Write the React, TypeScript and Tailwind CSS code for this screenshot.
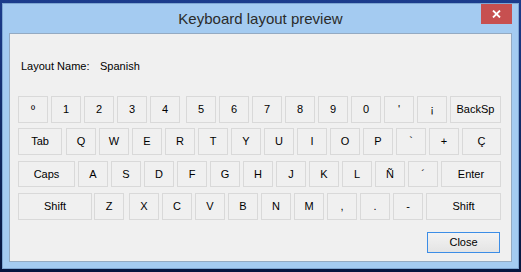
import React from "react";

type Key = { label: string; cls: string };

// widths and gaps taken from the dialog; the preview spaces keys unevenly
const rows: Key[][] = [
  [
    { label: "º", cls: "w-[30px]" },
    { label: "1", cls: "w-[30px] ml-[3px]" },
    { label: "2", cls: "w-[30px] ml-[3px]" },
    { label: "3", cls: "w-[30px] ml-[3px]" },
    { label: "4", cls: "w-[30px] ml-[3px]" },
    { label: "5", cls: "w-[30px] ml-[6px]" },
    { label: "6", cls: "w-[30px] ml-[3px]" },
    { label: "7", cls: "w-[30px] ml-[3px]" },
    { label: "8", cls: "w-[30px] ml-[3px]" },
    { label: "9", cls: "w-[30px] ml-[3px]" },
    { label: "0", cls: "w-[30px] ml-[3px]" },
    { label: "'", cls: "w-[30px] ml-[3px]" },
    { label: "¡", cls: "w-[30px] ml-[3px]" },
    { label: "BackSp", cls: "w-[51px] ml-[3px]" },
  ],
  [
    { label: "Tab", cls: "w-[44px]" },
    { label: "Q", cls: "w-[30px] ml-[4px]" },
    { label: "W", cls: "w-[30px] ml-[3px]" },
    { label: "E", cls: "w-[30px] ml-[3px]" },
    { label: "R", cls: "w-[30px] ml-[3px]" },
    { label: "T", cls: "w-[30px] ml-[3px]" },
    { label: "Y", cls: "w-[30px] ml-[3px]" },
    { label: "U", cls: "w-[30px] ml-[3px]" },
    { label: "I", cls: "w-[30px] ml-[3px]" },
    { label: "O", cls: "w-[30px] ml-[3px]" },
    { label: "P", cls: "w-[30px] ml-[3px]" },
    { label: "`", cls: "w-[30px] ml-[3px]" },
    { label: "+", cls: "w-[30px] ml-[3px]" },
    { label: "Ç", cls: "w-[39px] ml-[3px]" },
  ],
  [
    { label: "Caps", cls: "w-[57px]" },
    { label: "A", cls: "w-[30px] ml-[3px]" },
    { label: "S", cls: "w-[30px] ml-[3px]" },
    { label: "D", cls: "w-[30px] ml-[3px]" },
    { label: "F", cls: "w-[30px] ml-[3px]" },
    { label: "G", cls: "w-[30px] ml-[3px]" },
    { label: "H", cls: "w-[30px] ml-[3px]" },
    { label: "J", cls: "w-[30px] ml-[3px]" },
    { label: "K", cls: "w-[30px] ml-[3px]" },
    { label: "L", cls: "w-[30px] ml-[3px]" },
    { label: "Ñ", cls: "w-[30px] ml-[3px]" },
    { label: "´", cls: "w-[30px] ml-[3px]" },
    { label: "Enter", cls: "w-[60px] ml-[3px]" },
  ],
  [
    { label: "Shift", cls: "w-[74px]" },
    { label: "Z", cls: "w-[30px] ml-[2px]" },
    { label: "X", cls: "w-[30px] ml-[5px]" },
    { label: "C", cls: "w-[30px] ml-[3px]" },
    { label: "V", cls: "w-[30px] ml-[3px]" },
    { label: "B", cls: "w-[30px] ml-[3px]" },
    { label: "N", cls: "w-[30px] ml-[3px]" },
    { label: "M", cls: "w-[30px] ml-[3px]" },
    { label: ",", cls: "w-[30px] ml-[3px]" },
    { label: ".", cls: "w-[30px] ml-[3px]" },
    { label: "-", cls: "w-[30px] ml-[3px]" },
    { label: "Shift", cls: "w-[75px] ml-[3px]" },
  ],
];

function KeyCap({ k }: { k: Key }) {
  return (
    <div
      className={`${k.cls} h-full shrink-0 flex items-center justify-center border border-[#d9d9d9] bg-[#f0f0f0] text-[11px] text-black`}
    >
      {k.label}
    </div>
  );
}

export default function App() {
  return (
    <div
      className="w-[521px] h-[272px] pt-[3px] pl-[2px] bg-gradient-to-b from-[#1c3c8c] to-[#07173f] overflow-hidden"
      style={{ fontFamily: '"Liberation Sans", Arial, sans-serif' }}
    >
      <div className="w-[517px] h-[266px] border border-[#7ea6d2] bg-[#a4cbf1] flex flex-col px-[6px] pb-[6px]">
        {/* title bar */}
        <div className="h-[29px] grid grid-cols-[1fr_auto_1fr] shrink-0">
          <div />
          <div className="self-center pt-[1px] text-[15px] leading-[18px] text-[#2b2b2b]">
            Keyboard layout preview
          </div>
          <div className="flex justify-end items-start">
            <div className="w-[31px] h-[20px] bg-[#c75050] flex items-center justify-center">
              <svg width="9" height="8" viewBox="0 0 9 8">
                <path d="M1 0.5 L8 7.5 M8 0.5 L1 7.5" stroke="#fff" strokeWidth="1.8" fill="none" />
              </svg>
            </div>
          </div>
        </div>

        {/* client area */}
        <div className="flex-1 border border-[#94aac2] bg-[#f0f0f0] flex flex-col text-[11px] text-black">
          <div className="mt-[26px] h-[13px] leading-[13px] pl-[11px] flex">
            <span className="w-[79px]">Layout Name:</span>
            <span>Spanish</span>
          </div>

          <div className="mt-[23px] pl-[8px] flex flex-col gap-[5.9px]">
            {rows.map((row, i) => (
              <div key={i} className="flex h-[26.5px]">
                {row.map((k, j) => (
                  <KeyCap key={j} k={k} />
                ))}
              </div>
            ))}
          </div>

          <div className="mt-[12.5px] pr-[11px] flex justify-end">
            <button className="w-[73px] h-[21px] border border-[#3c8de6] bg-gradient-to-b from-[#f3f3f3] to-[#e4e4e4] text-[11px] text-black flex items-center justify-center">
              Close
            </button>
          </div>
        </div>
      </div>
    </div>
  );
}
